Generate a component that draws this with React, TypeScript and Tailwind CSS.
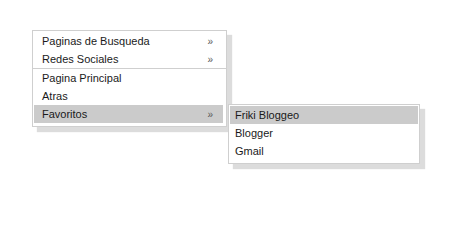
import React from "react";

function Row({ label, arrow, active, pl, children }: { label: string; arrow?: boolean; active?: boolean; pl: string; children?: React.ReactNode }) {
  return (
    <div className="relative">
      <div
        className={
          "flex h-[18px] items-center justify-between pr-[10px] " +
          pl +
          (active ? " bg-[#cbcbcb]" : "")
        }
      >
        <span>{label}</span>
        {arrow && <span className="text-[10px] text-[#555]">»</span>}
      </div>
      {children}
    </div>
  );
}

export default function App() {
  return (
    <div
      className="h-[230px] w-[474px] bg-white pl-[32px] pt-[30px] text-[11px] text-[#1a1a1a]"
      style={{ fontFamily: '"Liberation Sans", Arial, sans-serif' }}
    >
      <div className="relative w-[195px] border border-[#cfcfcf] bg-white pb-[3px] pl-[1px] pr-[3px] pt-[1px] shadow-[5px_5px_1px_#dcdcdc]">
        <Row label="Paginas de Busqueda" arrow pl="pl-[8px]" />
        <Row label="Redes Sociales" arrow pl="pl-[8px]" />
        <div className="-ml-[1px] -mr-[3px] h-px bg-[#cfcfcf]" />
        <Row label="Pagina Principal" pl="pl-[8px]" />
        <Row label="Atras" pl="pl-[8px]" />
        <Row label="Favoritos" arrow active pl="pl-[8px]">
          <div className="absolute left-[194px] top-[-1px] z-10 w-[192px] border border-[#cfcfcf] bg-white pb-[3px] pl-[1px] pr-[1px] pt-[1px] shadow-[5px_5px_1px_#dcdcdc]">
            <Row label="Friki Bloggeo" active pl="pl-[5px]" />
            <Row label="Blogger" pl="pl-[5px]" />
            <Row label="Gmail" pl="pl-[5px]" />
          </div>
        </Row>
      </div>
    </div>
  );
}
